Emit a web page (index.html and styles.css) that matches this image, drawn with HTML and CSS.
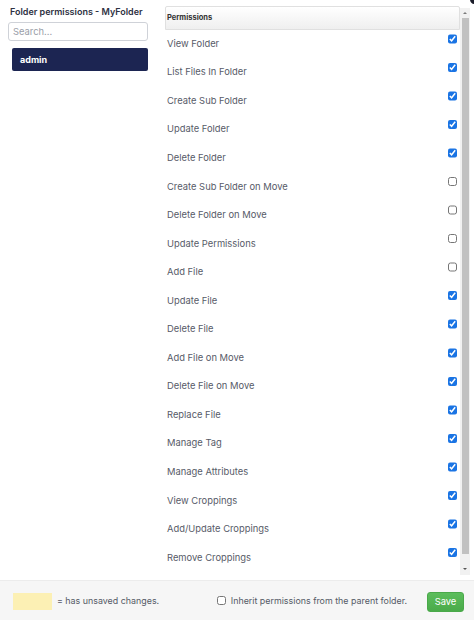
FILE: index.html
```html
<!DOCTYPE html>
<html>
<head>
<meta charset="utf-8">
<link rel="stylesheet" href="styles.css">
</head>
<body>
<div class="page">
  <div class="main">
    <aside class="sidebar">
      <div class="title">Folder permissions - MyFolder</div>
      <input class="search" type="text" placeholder="Search...">
      <div class="user">admin</div>
    </aside>
    <section class="content">
      <div class="table">
        <div class="thead">Permissions</div>
        <div class="row"><span>View Folder</span><input type="checkbox" checked></div>
        <div class="row"><span>List Files In Folder</span><input type="checkbox" checked></div>
        <div class="row"><span>Create Sub Folder</span><input type="checkbox" checked></div>
        <div class="row"><span>Update Folder</span><input type="checkbox" checked></div>
        <div class="row"><span>Delete Folder</span><input type="checkbox" checked></div>
        <div class="row"><span>Create Sub Folder on Move</span><input type="checkbox"></div>
        <div class="row"><span>Delete Folder on Move</span><input type="checkbox"></div>
        <div class="row"><span>Update Permissions</span><input type="checkbox"></div>
        <div class="row"><span>Add File</span><input type="checkbox"></div>
        <div class="row"><span>Update File</span><input type="checkbox" checked></div>
        <div class="row"><span>Delete File</span><input type="checkbox" checked></div>
        <div class="row"><span>Add File on Move</span><input type="checkbox" checked></div>
        <div class="row"><span>Delete File on Move</span><input type="checkbox" checked></div>
        <div class="row"><span>Replace File</span><input type="checkbox" checked></div>
        <div class="row"><span>Manage Tag</span><input type="checkbox" checked></div>
        <div class="row"><span>Manage Attributes</span><input type="checkbox" checked></div>
        <div class="row"><span>View Croppings</span><input type="checkbox" checked></div>
        <div class="row"><span>Add/Update Croppings</span><input type="checkbox" checked></div>
        <div class="row"><span>Remove Croppings</span><input type="checkbox" checked></div>
      </div>
      <div class="scrollbar">
        <div class="arrow up"></div>
        <div class="thumb"></div>
        <div class="arrow down"></div>
      </div>
    </section>
  </div>
  <footer class="footer">
    <span class="swatch"></span>
    <span class="legend">= has unsaved changes.</span>
    <label class="inherit"><input type="checkbox"><span>Inherit permissions from the parent folder.</span></label>
    <button class="save">Save</button>
  </footer>
  <span class="corner"></span>
</div>
</body>
</html>
```
FILE: styles.css
```css
html, body {
  margin: 0;
  padding: 0;
  background: #fff;
  font-family: Inter, "Noto Sans", sans-serif;
}
.page {
  position: relative;
  width: 474px;
  height: 620px;
  display: flex;
  flex-direction: column;
  overflow: hidden;
}
.main {
  display: flex;
  height: 580px;
}
.sidebar {
  width: 157px;
  padding: 6px 0 0 8px;
  box-sizing: border-box;
  display: flex;
  flex-direction: column;
}
.title {
  font-size: 9px;
  font-weight: 600;
  color: #2e3142;
  line-height: 12px;
  margin-left: 2px;
  white-space: nowrap;
}
.search {
  margin: 4px 0 0 0;
  width: 140px;
  height: 19px;
  box-sizing: border-box;
  border: 1px solid #cfd2d8;
  border-radius: 3px;
  padding: 0 4px;
  font-family: Inter, sans-serif;
  font-size: 9.4px;
  outline: none;
}
.search::placeholder {
  color: #9a9ea8;
}
.user {
  margin: 7px 0 0 4px;
  width: 136px;
  height: 23px;
  box-sizing: border-box;
  background: #1c2552;
  color: #fff;
  font-weight: 700;
  font-size: 9px;
  line-height: 23px;
  padding-left: 8px;
  border-radius: 2px;
}
.content {
  display: flex;
  margin-left: 8px;
  padding-top: 6px;
}
.table {
  width: 295px;
}
.thead {
  height: 24px;
  box-sizing: border-box;
  border: 1px solid #e0e0e0;
  border-radius: 2px 2px 0 0;
  background: linear-gradient(#ffffff, #efefef);
  font-size: 7.5px;
  font-weight: 700;
  color: #333;
  line-height: 22px;
  padding-left: 1px;
  margin-bottom: -1px;
}
.row {
  display: flex;
  justify-content: space-between;
  align-items: center;
  height: 28.56px;
  padding: 0 3px 0 2px;
  font-size: 9.4px;
  color: #575b68;
}
.row input {
  align-self: flex-start;
  margin: 5px 0 0 0;
  width: 9.5px;
  height: 9.5px;
  accent-color: #1a74e4;
}
.scrollbar {
  width: 10px;
  margin-top: 2px;
  height: 567px;
  background: #f1f1f1;
  display: flex;
  flex-direction: column;
  align-items: center;
}
.arrow {
  width: 0;
  height: 0;
  border-left: 2.5px solid transparent;
  border-right: 2.5px solid transparent;
}
.arrow.up {
  margin: 4px 0 4px;
  border-bottom: 2.5px solid #7a7a7a;
}
.arrow.down {
  margin: 14px 0 5px;
  border-top: 2.5px solid #555;
}
.thumb {
  width: 7px;
  flex: 1;
  background: #c1c1c1;
}
.footer {
  height: 40px;
  box-sizing: border-box;
  background: #f6f6f6;
  border-top: 1px solid #ececec;
  display: flex;
  align-items: center;
  padding: 0 10px 0 13px;
  font-size: 8.9px;
  color: #555a66;
}
.swatch {
  width: 39px;
  height: 17px;
  background: #fcf0b4;
  margin-top: 2px;
}
.legend {
  margin-left: 5px;
}
.inherit {
  margin-left: auto;
  display: flex;
  align-items: center;
}
.inherit input {
  margin: 0 5px 0 0;
  width: 8.5px;
  height: 8.5px;
}
.save {
  margin-left: 20px;
  width: 37px;
  height: 20px;
  border: 1px solid #4aa94a;
  border-radius: 3px;
  background: linear-gradient(#5cbd5c, #4aab4a);
  color: #fff;
  font-family: Inter, sans-serif;
  font-size: 9.4px;
  padding: 0;
  margin-top: 2px;
}
.corner {
  position: absolute;
  top: -5px;
  right: -5px;
  width: 9px;
  height: 9px;
  border-radius: 50%;
  background: #1b1d2a;
}
```
